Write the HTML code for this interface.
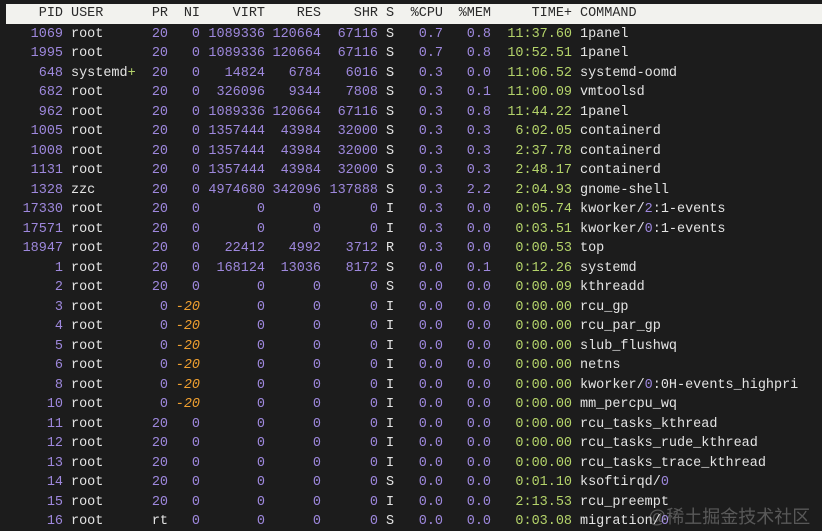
<!DOCTYPE html>
<html><head><meta charset="utf-8"><style>
html,body{margin:0;padding:0;background:#1c1c1c;width:822px;height:531px;overflow:hidden;position:relative}
body{font-family:"Liberation Mono",monospace;font-size:13.47px;color:#e4e4e4}
.hb{position:absolute;left:6px;top:4px;width:816px;height:20px;background:#f2f2ee}
.r{position:absolute;left:0;width:822px;height:19.5px;line-height:19.5px;white-space:pre}
.r span{position:absolute;top:0}
.a{right:759px}.b{right:654px}.c{right:622px}.d{right:557px}.e{right:501px}.f{right:444px}.h{right:379px}.i{right:331px}.j{right:250px}
.u{left:71px}.g{left:386px}.k{left:580px}
.p{color:#9e88dd}.gr{color:#b4d36a}.o{color:#f0a030;font-style:italic}
.hd{color:#2a2a2a;top:4px;line-height:20px;height:20px}
.wm{position:absolute;left:648px;top:503px;font-family:"Liberation Sans","Noto Sans CJK SC",sans-serif;font-size:18px;color:rgba(200,200,200,0.35)}
</style></head><body>
<div class="hb"></div>
<div class="r hd"><span class="a">PID</span><span class="u">USER</span><span class="b">PR</span><span class="c">NI</span><span class="d">VIRT</span><span class="e">RES</span><span class="f">SHR</span><span class="g">S</span><span class="h">%CPU</span><span class="i">%MEM</span><span class="j">TIME+</span><span class="k">COMMAND</span></div>

<div class="r" style="top:24.5px"><span class="a p">1069</span><span class="u">root</span><span class="b p">20</span><span class="c p">0</span><span class="d p">1089336</span><span class="e p">120664</span><span class="f p">67116</span><span class="g">S</span><span class="h p">0.7</span><span class="i p">0.8</span><span class="j gr">11:37.60</span><span class="k">1panel</span></div>
<div class="r" style="top:44px"><span class="a p">1995</span><span class="u">root</span><span class="b p">20</span><span class="c p">0</span><span class="d p">1089336</span><span class="e p">120664</span><span class="f p">67116</span><span class="g">S</span><span class="h p">0.7</span><span class="i p">0.8</span><span class="j gr">10:52.51</span><span class="k">1panel</span></div>
<div class="r" style="top:63.5px"><span class="a p">648</span><span class="u">systemd<span class="gr" style="position:static">+</span></span><span class="b p">20</span><span class="c p">0</span><span class="d p">14824</span><span class="e p">6784</span><span class="f p">6016</span><span class="g">S</span><span class="h p">0.3</span><span class="i p">0.0</span><span class="j gr">11:06.52</span><span class="k">systemd-oomd</span></div>
<div class="r" style="top:83px"><span class="a p">682</span><span class="u">root</span><span class="b p">20</span><span class="c p">0</span><span class="d p">326096</span><span class="e p">9344</span><span class="f p">7808</span><span class="g">S</span><span class="h p">0.3</span><span class="i p">0.1</span><span class="j gr">11:00.09</span><span class="k">vmtoolsd</span></div>
<div class="r" style="top:102.5px"><span class="a p">962</span><span class="u">root</span><span class="b p">20</span><span class="c p">0</span><span class="d p">1089336</span><span class="e p">120664</span><span class="f p">67116</span><span class="g">S</span><span class="h p">0.3</span><span class="i p">0.8</span><span class="j gr">11:44.22</span><span class="k">1panel</span></div>
<div class="r" style="top:122px"><span class="a p">1005</span><span class="u">root</span><span class="b p">20</span><span class="c p">0</span><span class="d p">1357444</span><span class="e p">43984</span><span class="f p">32000</span><span class="g">S</span><span class="h p">0.3</span><span class="i p">0.3</span><span class="j gr">6:02.05</span><span class="k">containerd</span></div>
<div class="r" style="top:141.5px"><span class="a p">1008</span><span class="u">root</span><span class="b p">20</span><span class="c p">0</span><span class="d p">1357444</span><span class="e p">43984</span><span class="f p">32000</span><span class="g">S</span><span class="h p">0.3</span><span class="i p">0.3</span><span class="j gr">2:37.78</span><span class="k">containerd</span></div>
<div class="r" style="top:161px"><span class="a p">1131</span><span class="u">root</span><span class="b p">20</span><span class="c p">0</span><span class="d p">1357444</span><span class="e p">43984</span><span class="f p">32000</span><span class="g">S</span><span class="h p">0.3</span><span class="i p">0.3</span><span class="j gr">2:48.17</span><span class="k">containerd</span></div>
<div class="r" style="top:180.5px"><span class="a p">1328</span><span class="u">zzc</span><span class="b p">20</span><span class="c p">0</span><span class="d p">4974680</span><span class="e p">342096</span><span class="f p">137888</span><span class="g">S</span><span class="h p">0.3</span><span class="i p">2.2</span><span class="j gr">2:04.93</span><span class="k">gnome-shell</span></div>
<div class="r" style="top:200px"><span class="a p">17330</span><span class="u">root</span><span class="b p">20</span><span class="c p">0</span><span class="d p">0</span><span class="e p">0</span><span class="f p">0</span><span class="g">I</span><span class="h p">0.3</span><span class="i p">0.0</span><span class="j gr">0:05.74</span><span class="k">kworker/<i class="p" style="font-style:normal">2</i>:1-events</span></div>
<div class="r" style="top:219.5px"><span class="a p">17571</span><span class="u">root</span><span class="b p">20</span><span class="c p">0</span><span class="d p">0</span><span class="e p">0</span><span class="f p">0</span><span class="g">I</span><span class="h p">0.3</span><span class="i p">0.0</span><span class="j gr">0:03.51</span><span class="k">kworker/<i class="p" style="font-style:normal">0</i>:1-events</span></div>
<div class="r" style="top:239px"><span class="a p">18947</span><span class="u">root</span><span class="b p">20</span><span class="c p">0</span><span class="d p">22412</span><span class="e p">4992</span><span class="f p">3712</span><span class="g">R</span><span class="h p">0.3</span><span class="i p">0.0</span><span class="j gr">0:00.53</span><span class="k">top</span></div>
<div class="r" style="top:258.5px"><span class="a p">1</span><span class="u">root</span><span class="b p">20</span><span class="c p">0</span><span class="d p">168124</span><span class="e p">13036</span><span class="f p">8172</span><span class="g">S</span><span class="h p">0.0</span><span class="i p">0.1</span><span class="j gr">0:12.26</span><span class="k">systemd</span></div>
<div class="r" style="top:278px"><span class="a p">2</span><span class="u">root</span><span class="b p">20</span><span class="c p">0</span><span class="d p">0</span><span class="e p">0</span><span class="f p">0</span><span class="g">S</span><span class="h p">0.0</span><span class="i p">0.0</span><span class="j gr">0:00.09</span><span class="k">kthreadd</span></div>
<div class="r" style="top:297.5px"><span class="a p">3</span><span class="u">root</span><span class="b p">0</span><span class="c o">-20</span><span class="d p">0</span><span class="e p">0</span><span class="f p">0</span><span class="g">I</span><span class="h p">0.0</span><span class="i p">0.0</span><span class="j gr">0:00.00</span><span class="k">rcu_gp</span></div>
<div class="r" style="top:317px"><span class="a p">4</span><span class="u">root</span><span class="b p">0</span><span class="c o">-20</span><span class="d p">0</span><span class="e p">0</span><span class="f p">0</span><span class="g">I</span><span class="h p">0.0</span><span class="i p">0.0</span><span class="j gr">0:00.00</span><span class="k">rcu_par_gp</span></div>
<div class="r" style="top:336.5px"><span class="a p">5</span><span class="u">root</span><span class="b p">0</span><span class="c o">-20</span><span class="d p">0</span><span class="e p">0</span><span class="f p">0</span><span class="g">I</span><span class="h p">0.0</span><span class="i p">0.0</span><span class="j gr">0:00.00</span><span class="k">slub_flushwq</span></div>
<div class="r" style="top:356px"><span class="a p">6</span><span class="u">root</span><span class="b p">0</span><span class="c o">-20</span><span class="d p">0</span><span class="e p">0</span><span class="f p">0</span><span class="g">I</span><span class="h p">0.0</span><span class="i p">0.0</span><span class="j gr">0:00.00</span><span class="k">netns</span></div>
<div class="r" style="top:375.5px"><span class="a p">8</span><span class="u">root</span><span class="b p">0</span><span class="c o">-20</span><span class="d p">0</span><span class="e p">0</span><span class="f p">0</span><span class="g">I</span><span class="h p">0.0</span><span class="i p">0.0</span><span class="j gr">0:00.00</span><span class="k">kworker/<i class="p" style="font-style:normal">0</i>:0H-events_highpri</span></div>
<div class="r" style="top:395px"><span class="a p">10</span><span class="u">root</span><span class="b p">0</span><span class="c o">-20</span><span class="d p">0</span><span class="e p">0</span><span class="f p">0</span><span class="g">I</span><span class="h p">0.0</span><span class="i p">0.0</span><span class="j gr">0:00.00</span><span class="k">mm_percpu_wq</span></div>
<div class="r" style="top:414.5px"><span class="a p">11</span><span class="u">root</span><span class="b p">20</span><span class="c p">0</span><span class="d p">0</span><span class="e p">0</span><span class="f p">0</span><span class="g">I</span><span class="h p">0.0</span><span class="i p">0.0</span><span class="j gr">0:00.00</span><span class="k">rcu_tasks_kthread</span></div>
<div class="r" style="top:434px"><span class="a p">12</span><span class="u">root</span><span class="b p">20</span><span class="c p">0</span><span class="d p">0</span><span class="e p">0</span><span class="f p">0</span><span class="g">I</span><span class="h p">0.0</span><span class="i p">0.0</span><span class="j gr">0:00.00</span><span class="k">rcu_tasks_rude_kthread</span></div>
<div class="r" style="top:453.5px"><span class="a p">13</span><span class="u">root</span><span class="b p">20</span><span class="c p">0</span><span class="d p">0</span><span class="e p">0</span><span class="f p">0</span><span class="g">I</span><span class="h p">0.0</span><span class="i p">0.0</span><span class="j gr">0:00.00</span><span class="k">rcu_tasks_trace_kthread</span></div>
<div class="r" style="top:473px"><span class="a p">14</span><span class="u">root</span><span class="b p">20</span><span class="c p">0</span><span class="d p">0</span><span class="e p">0</span><span class="f p">0</span><span class="g">S</span><span class="h p">0.0</span><span class="i p">0.0</span><span class="j gr">0:01.10</span><span class="k">ksoftirqd/<i class="p" style="font-style:normal">0</i></span></div>
<div class="r" style="top:492.5px"><span class="a p">15</span><span class="u">root</span><span class="b p">20</span><span class="c p">0</span><span class="d p">0</span><span class="e p">0</span><span class="f p">0</span><span class="g">I</span><span class="h p">0.0</span><span class="i p">0.0</span><span class="j gr">2:13.53</span><span class="k">rcu_preempt</span></div>
<div class="r" style="top:512px"><span class="a p">16</span><span class="u">root</span><span class="b">rt</span><span class="c p">0</span><span class="d p">0</span><span class="e p">0</span><span class="f p">0</span><span class="g">S</span><span class="h p">0.0</span><span class="i p">0.0</span><span class="j gr">0:03.08</span><span class="k">migration/<i class="p" style="font-style:normal">0</i></span></div>
<div class="wm">@稀土掘金技术社区</div>
</body></html>
